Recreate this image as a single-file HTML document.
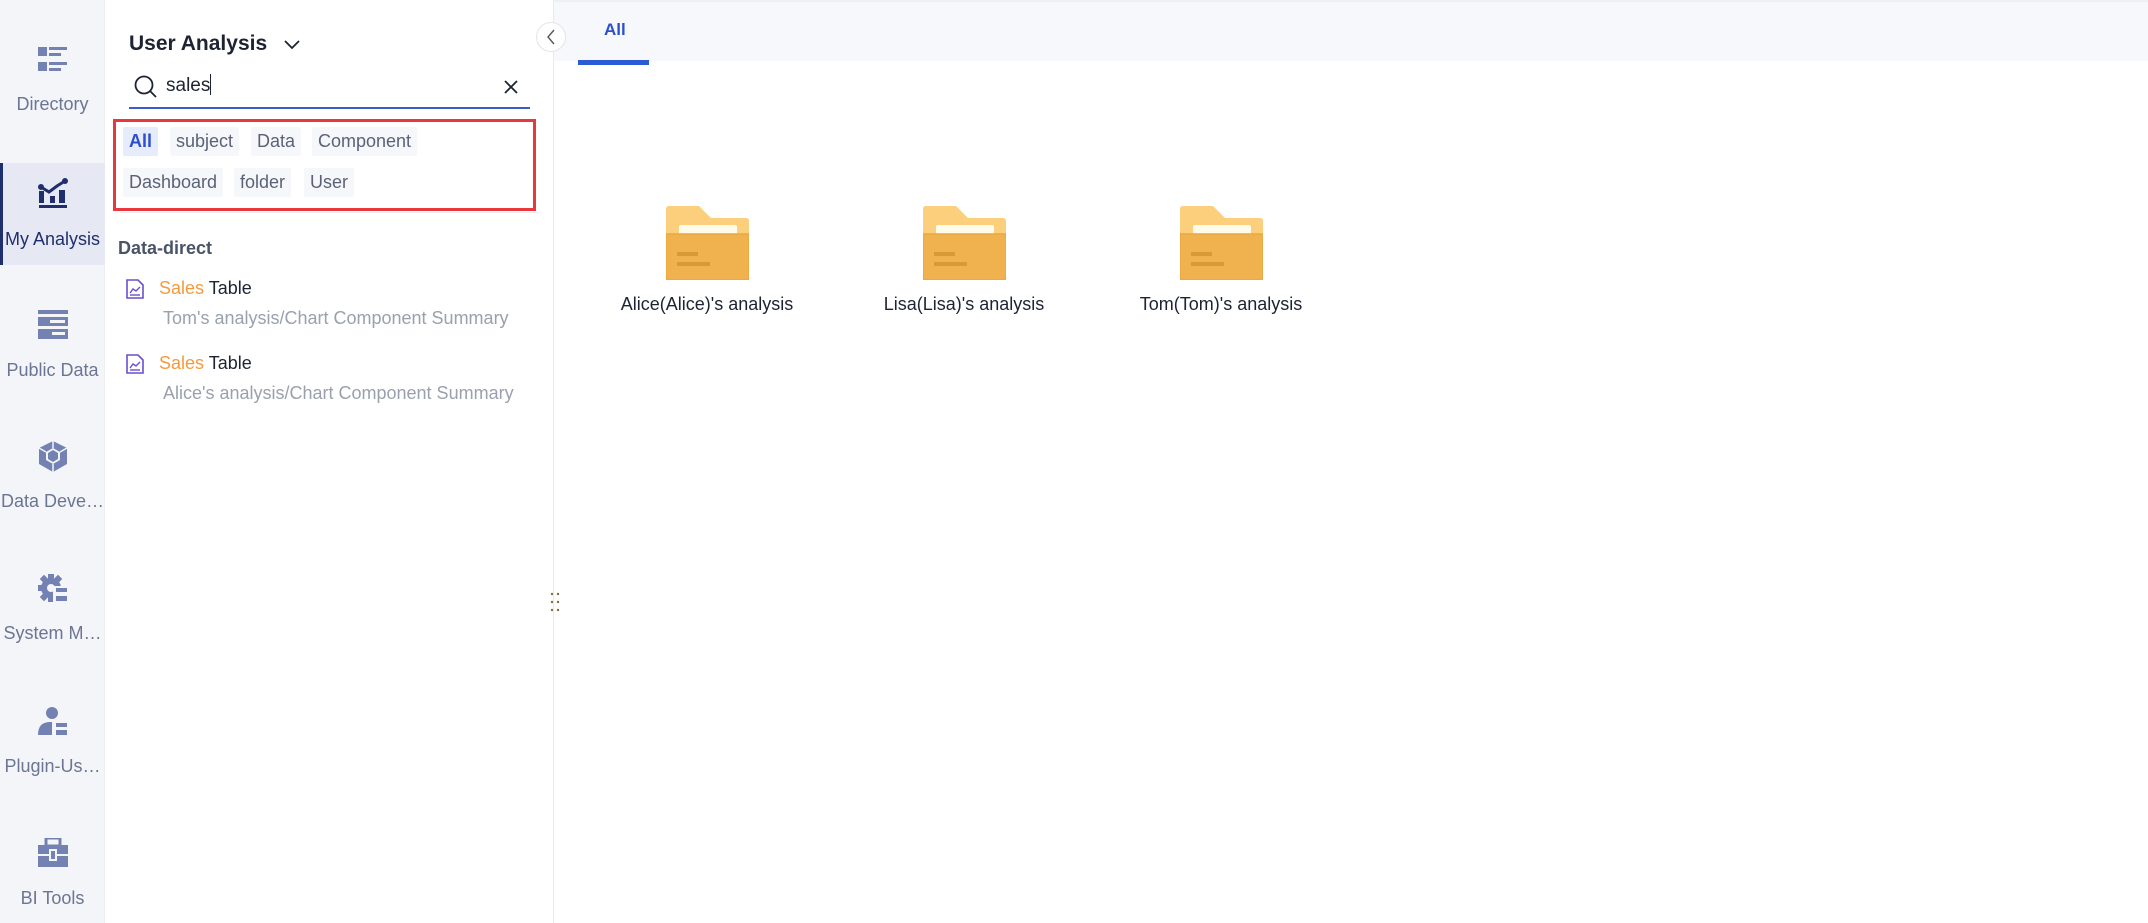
<!DOCTYPE html>
<html><head><meta charset="utf-8">
<style>
*{margin:0;padding:0;box-sizing:border-box}
body{width:2148px;height:923px;overflow:hidden;background:#fff;font-family:"Liberation Sans",Arial,sans-serif;position:relative}
.abs{position:absolute}
#side{left:0;top:0;width:105px;height:923px;background:#f4f5f9;border-right:1px solid #eceef3}
.nav{position:absolute;left:0;width:105px;text-align:center;color:#6b7594;font-size:18px;white-space:nowrap;overflow:hidden}
.nav svg{display:block;margin:0 auto}
#active{left:0;top:163px;width:105px;height:102px;background:#e6e9f3;border-left:3px solid #1f2f6e}
#panel{left:105px;top:0;width:449px;height:923px;background:#fff;border-right:1px solid #e8eaf0}
.chip{position:absolute;height:29px;line-height:29px;padding:0 6px;background:#f6f7fa;color:#5a6278;font-size:18px;border-radius:2px}
.title{font-size:18px;color:#1d2333}
.sub{font-size:18px;color:#9aa0ad}
.or{color:#f59a3c}
.lbl{position:absolute;font-size:18px;color:#1d2333;text-align:center;width:260px}
</style></head><body>
<div id="side" class="abs"></div>
<div id="active" class="abs"></div>

<div class="nav" style="top:47px"><svg width="30" height="27" viewBox="0 0 30 27"><rect x="0" y="0" width="9" height="9" fill="#7482b3"/><rect x="0" y="15" width="9" height="9" fill="#7482b3"/><rect x="11" y="0" width="18" height="3" fill="#7482b3"/><rect x="11" y="6" width="12" height="3" fill="#7482b3"/><rect x="11" y="15" width="18" height="3" fill="#7482b3"/><rect x="11" y="21" width="12" height="3" fill="#7482b3"/></svg><div style="margin-top:20px">Directory</div></div>

<div class="nav" style="top:178px;color:#1f2f6e"><svg width="30" height="30" viewBox="0 0 30 30"><path d="M3 9 L11 14 L19 8 L27 3" stroke="#1f2f6e" stroke-width="3" fill="none"/><circle cx="3" cy="9" r="3" fill="#1f2f6e"/><circle cx="27" cy="3" r="3" fill="#1f2f6e"/><rect x="1" y="13" width="5" height="12" fill="#1f2f6e"/><rect x="12" y="18" width="5" height="7" fill="#1f2f6e"/><rect x="21" y="12" width="6" height="13" fill="#1f2f6e"/><rect x="1" y="27" width="28" height="3" fill="#1f2f6e"/></svg><div style="margin-top:21px">My Analysis</div></div>

<div class="nav" style="top:310px"><svg width="30" height="30" viewBox="0 0 30 30"><rect x="0" y="0" width="30" height="4" fill="#7482b3"/><rect x="0" y="7" width="30" height="9" fill="#7482b3"/><rect x="0" y="19" width="30" height="10" fill="#7482b3"/><rect x="12" y="10" width="15" height="3" fill="#f4f5f9"/><rect x="14" y="22" width="13" height="3" fill="#f4f5f9"/></svg><div style="margin-top:20px">Public Data</div></div>

<div class="nav" style="top:441px"><svg width="30" height="32" viewBox="0 0 30 32"><path d="M15 0 L29 7 L29 23 L15 31 L1 23 L1 7 Z" fill="#7482b3"/><path d="M15 7 L22 11 L22 19 L15 23 L8 19 L8 11 Z" fill="#f4f5f9"/><path d="M15 9 L20 12 L20 18 L15 21 L10 18 L10 12 Z" fill="#7482b3"/><path d="M15 0 V7 M1 7 L8 11 M29 7 L22 11 M15 23 V31" stroke="#f4f5f9" stroke-width="1.5"/></svg><div style="margin-top:18px">Data Deve…</div></div>

<div class="nav" style="top:573px"><svg width="30" height="30" viewBox="0 0 30 30"><circle cx="13" cy="15" r="10" fill="#7482b3"/><g fill="#7482b3"><rect x="10" y="1" width="6" height="6"/><rect x="10" y="23" width="6" height="6"/><rect x="0" y="12" width="6" height="6"/><rect x="3" y="3" width="6" height="6" transform="rotate(45 6 6)"/><rect x="3" y="21" width="6" height="6" transform="rotate(45 6 24)"/><rect x="17" y="3" width="6" height="6" transform="rotate(45 20 6)"/></g><circle cx="13" cy="15" r="4" fill="#f4f5f9"/><rect x="15" y="13" width="15" height="17" fill="#f4f5f9"/><rect x="18" y="15" width="11" height="4" fill="#7482b3"/><rect x="18" y="23" width="11" height="5" fill="#7482b3"/></svg><div style="margin-top:20px">System M…</div></div>

<div class="nav" style="top:706px"><svg width="30" height="30" viewBox="0 0 30 30"><circle cx="14" cy="7" r="6" fill="#7482b3"/><path d="M0 29 Q0 16 12 16 L14 16 L14 29 Z" fill="#7482b3"/><rect x="18" y="17" width="11" height="4" fill="#7482b3"/><rect x="18" y="24" width="11" height="5" fill="#7482b3"/></svg><div style="margin-top:20px">Plugin-Us…</div></div>

<div class="nav" style="top:838px"><svg width="30" height="30" viewBox="0 0 30 30"><rect x="8" y="0" width="14" height="8" fill="none" stroke="#7482b3" stroke-width="3"/><rect x="0" y="7" width="30" height="9" fill="#7482b3"/><rect x="0" y="18" width="30" height="11" fill="#7482b3"/><rect x="12" y="12" width="6" height="10" fill="#7482b3" stroke="#f4f5f9" stroke-width="2"/></svg><div style="margin-top:20px">BI Tools</div></div>

<div id="panel" class="abs"></div>
<div class="abs" style="left:129px;top:32px;font-size:21px;font-weight:bold;color:#1d2333">User Analysis</div>
<svg class="abs" style="left:284px;top:40px" width="16" height="10" viewBox="0 0 16 10"><path d="M1 1 L8 8 L15 1" stroke="#1d2333" stroke-width="1.8" fill="none"/></svg>
<svg class="abs" style="left:134px;top:75px" width="23" height="23" viewBox="0 0 23 23"><circle cx="10" cy="10" r="8.5" stroke="#1d2333" stroke-width="1.8" fill="none"/><path d="M16 16 L22 22" stroke="#1d2333" stroke-width="1.8"/></svg>
<div class="abs" style="left:166px;top:74px;font-size:19px;color:#1d2333">sales<span style="display:inline-block;width:1px;height:21px;background:#1d2333;vertical-align:-4px"></span></div>
<svg class="abs" style="left:504px;top:80px" width="14" height="14" viewBox="0 0 14 14"><path d="M1 1 L13 13 M13 1 L1 13" stroke="#1d2333" stroke-width="1.8"/></svg>
<div class="abs" style="left:129px;top:107px;width:401px;height:2px;background:#3b5ccc"></div>

<div class="abs" style="left:113px;top:119px;width:423px;height:92px;border:3px solid #e8383d"></div>
<div class="chip" style="left:123px;top:127px;background:#e6ecfb;color:#2c4fcf;font-weight:bold">All</div>
<div class="chip" style="left:170px;top:127px">subject</div>
<div class="chip" style="left:251px;top:127px">Data</div>
<div class="chip" style="left:312px;top:127px">Component</div>
<div class="chip" style="left:123px;top:168px">Dashboard</div>
<div class="chip" style="left:234px;top:168px">folder</div>
<div class="chip" style="left:304px;top:168px">User</div>
<div class="abs" style="left:120px;top:212px;width:420px;height:1px;background:#eceef2"></div>

<div class="abs" style="left:118px;top:238px;font-size:18px;font-weight:bold;color:#4a5468">Data-direct</div>

<svg class="abs" style="left:126px;top:279px" width="18" height="20" viewBox="0 0 18 20"><path d="M1 1 H12 L17 6 V19 H1 Z" fill="none" stroke="#6a4fd1" stroke-width="1.6"/><path d="M4 14 L7 10 L10 12 L14 8" stroke="#6a4fd1" stroke-width="1.4" fill="none"/><path d="M4 16 H14" stroke="#6a4fd1" stroke-width="1.4"/></svg>
<div class="abs title" style="left:159px;top:278px"><span class="or">Sales</span> Table</div>
<div class="abs sub" style="left:163px;top:308px">Tom's analysis/Chart Component Summary</div>
<svg class="abs" style="left:126px;top:354px" width="18" height="20" viewBox="0 0 18 20"><path d="M1 1 H12 L17 6 V19 H1 Z" fill="none" stroke="#6a4fd1" stroke-width="1.6"/><path d="M4 14 L7 10 L10 12 L14 8" stroke="#6a4fd1" stroke-width="1.4" fill="none"/><path d="M4 16 H14" stroke="#6a4fd1" stroke-width="1.4"/></svg>
<div class="abs title" style="left:159px;top:353px"><span class="or">Sales</span> Table</div>
<div class="abs sub" style="left:163px;top:383px">Alice's analysis/Chart Component Summary</div>

<div class="abs" style="left:554px;top:0;width:1594px;height:61px;background:#f7f8fc;border-top:2px solid #eef0f4"></div>
<div class="abs" style="left:604px;top:20px;font-size:17px;font-weight:bold;color:#2c4fcf">All</div>
<div class="abs" style="left:578px;top:60px;width:71px;height:5px;background:#2c5bd6"></div>
<div class="abs" style="left:536px;top:22px;width:30px;height:30px;border-radius:50%;border:1px solid #e3e5ea;background:#fff"></div>
<svg class="abs" style="left:546px;top:29px" width="10" height="16" viewBox="0 0 10 16"><path d="M8 1 L2 8 L8 15" stroke="#555" stroke-width="1.4" fill="none"/></svg>
<svg class="abs" style="left:550px;top:592px" width="10" height="22" viewBox="0 0 10 22"><g fill="#8a6a3a"><circle cx="2" cy="2" r="1.2"/><circle cx="8" cy="2" r="1.2"/><circle cx="2" cy="10" r="1.2"/><circle cx="8" cy="10" r="1.2"/><circle cx="2" cy="18" r="1.2"/><circle cx="8" cy="18" r="1.2"/></g></svg>

<svg width="0" height="0" style="position:absolute"><defs><g id="fold"><path d="M3 0 H33 L45 12 H80 Q83 12 83 15 V71 Q83 74 80 74 H3 Q0 74 0 71 V3 Q0 0 3 0 Z" fill="#fccf7d"/><rect x="13" y="19" width="58" height="12" rx="2" fill="#fffbea"/><path d="M0 28 H83 V71 Q83 74 80 74 H3 Q0 74 0 71 Z" fill="#f0b24e" stroke="#eaa73e" stroke-width="1.5"/><rect x="11" y="46" width="21" height="4" fill="#d99a35"/><rect x="11" y="56" width="33" height="4" fill="#d99a35"/></g></defs></svg>
<svg class="abs" style="left:666px;top:206px" width="83" height="74"><use href="#fold"/></svg>
<svg class="abs" style="left:923px;top:206px" width="83" height="74"><use href="#fold"/></svg>
<svg class="abs" style="left:1180px;top:206px" width="83" height="74"><use href="#fold"/></svg>
<div class="lbl" style="left:577px;top:294px">Alice(Alice)'s analysis</div>
<div class="lbl" style="left:834px;top:294px">Lisa(Lisa)'s analysis</div>
<div class="lbl" style="left:1091px;top:294px">Tom(Tom)'s analysis</div>
</body></html>
